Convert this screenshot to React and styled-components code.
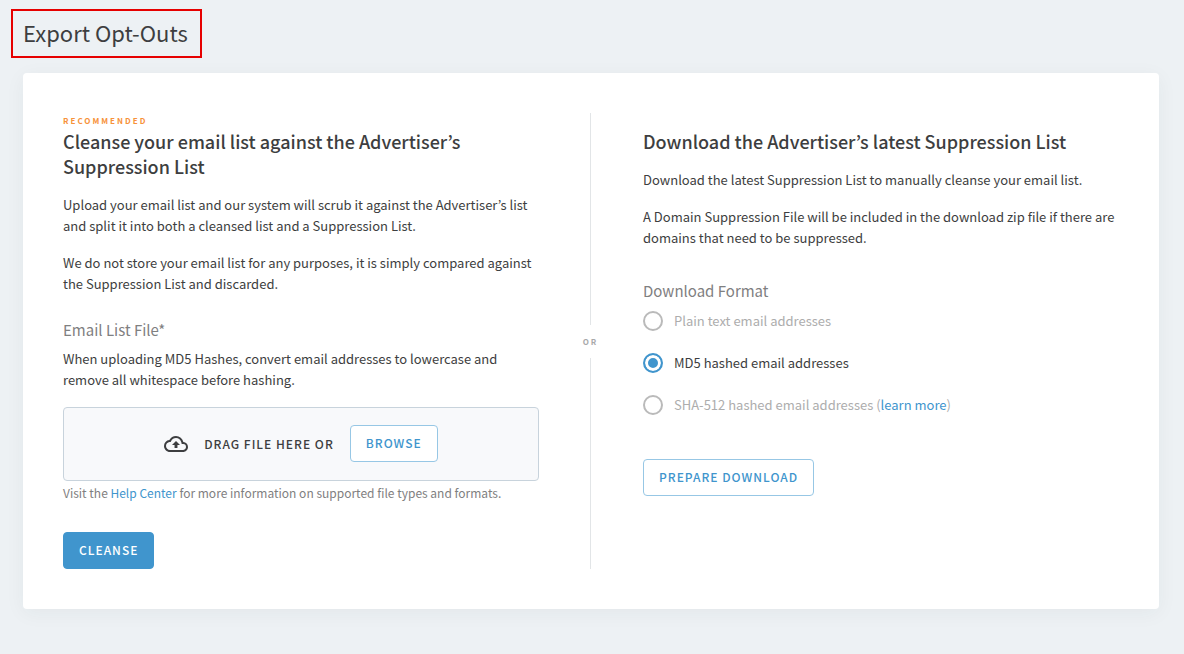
import { useRef, useState } from 'react';
import styled, { createGlobalStyle } from 'styled-components';
import { MdOutlineBackup } from 'react-icons/md';

const GlobalStyle = createGlobalStyle`
  * {
    box-sizing: border-box;
  }

  body {
    margin: 0;
    min-height: 100vh;
    background-color: #edf1f4;
    color: #3d3e40;
    font-family: 'Noto Sans CJK KR', 'Noto Sans', sans-serif;
    font-size: 13px;
    line-height: 21px;
  }
`;

const Container = styled.main`
  padding: 9px 11px 45px;
`;

const Title = styled.h1`
  width: fit-content;
  margin: 0;
  padding: 6px 12px 8px 10px;
  border: 2px solid #e60000;
  font-size: 22px;
  font-weight: 400;
  line-height: 31px;
`;

const Card = styled.div`
  display: grid;
  grid-template-columns: 1fr 104px 1fr;
  margin: 15px 14px 0 12px;
  padding: 40px;
  border-radius: 4px;
  background-color: white;
  box-shadow: 0 4px 20px rgba(40, 50, 60, 0.05);
`;

const Column = styled.section`
  display: flex;
  flex-direction: column;
  align-items: flex-start;
`;

const Tag = styled.div`
  min-height: 16px;
  color: #f7923a;
  font-size: 8px;
  font-weight: 700;
  letter-spacing: 2px;
  line-height: 16px;
  text-transform: uppercase;
`;

const Heading = styled.h2`
  margin: 0 0 15px;
  font-size: 18px;
  font-weight: 500;
  line-height: 25px;
`;

const Text = styled.p`
  margin: 0 0 16px;
`;

const FieldLabel = styled.label`
  margin: 8px 0 6px;
  color: #7f8081;
  font-size: 15px;
  line-height: 24px;
`;

const DropZone = styled.div`
  display: flex;
  align-items: center;
  justify-content: center;
  gap: 16px;
  width: 100%;
  margin-top: 1px;
  padding: 17px 17px 18px;
  border: 1px solid #c8d3dc;
  border-radius: 4px;
  background-color: #f8f9fb;
  font-size: 12px;
  font-weight: 500;
  letter-spacing: 1px;
  text-transform: uppercase;
`;

const HiddenInput = styled.input`
  display: none;
`;

const Button = styled.button`
  padding: 6px 15px 8px;
  border: 1px solid ${(props) => (props.$filled ? '#4095cd' : '#97c7e5')};
  border-radius: 4px;
  background-color: ${(props) => (props.$filled ? '#4095cd' : 'white')};
  color: ${(props) => (props.$filled ? 'white' : '#4095cd')};
  font-family: inherit;
  font-size: 12px;
  font-weight: 500;
  letter-spacing: 1px;
  line-height: 21px;
  text-transform: uppercase;
  cursor: pointer;
`;

const Hint = styled.p`
  margin: 3px 0 30px;
  color: #7f8081;
  font-size: 12px;
  line-height: 18px;
`;

const Link = styled.a`
  color: #4095cd;
  text-decoration: none;
`;

const Divider = styled.div`
  display: flex;
  flex-direction: column;
  align-items: center;
  gap: 6px;
  padding-right: 1px;
  color: #a8a9aa;
  font-size: 8px;
  font-weight: 700;
  letter-spacing: 2px;

  &::before,
  &::after {
    content: '';
    flex: 1;
    border-left: 1px solid #e2e5e7;
  }
`;

const Options = styled.fieldset`
  display: flex;
  flex-direction: column;
  gap: 22px;
  margin: 15px 0 44px;
  padding: 0;
  border: none;
`;

const Legend = styled.legend`
  margin-bottom: 8px;
  padding: 0;
  color: #7f8081;
  font-size: 15px;
  line-height: 24px;
`;

const Option = styled.label`
  display: flex;
  align-items: center;
  gap: 11px;
  color: ${(props) => (props.$active ? '#3d3e40' : '#adadad')};
  line-height: 20px;
`;

const Radio = styled.input`
  appearance: none;
  width: 20px;
  height: 20px;
  margin: 0;
  border: 2px solid #bababa;
  border-radius: 50%;

  &:checked {
    border-color: #4095cd;
    background-color: #4095cd;
    box-shadow: inset 0 0 0 3px white;
  }
`;

const formats = [
  { id: 'plain', label: 'Plain text email addresses' },
  { id: 'md5', label: 'MD5 hashed email addresses' },
  { id: 'sha512', label: 'SHA-512 hashed email addresses', more: true },
];

const App = () => {
  const [format, setFormat] = useState('md5');
  const fileInput = useRef(null);

  return (
    <Container>
      <GlobalStyle />
      <Title>Export Opt-Outs</Title>
      <Card>
        <Column>
          <Tag>Recommended</Tag>
          <Heading>Cleanse your email list against the Advertiser’s Suppression List</Heading>
          <Text>
            Upload your email list and our system will scrub it against the Advertiser’s list and
            split it into both a cleansed list and a Suppression List.
          </Text>
          <Text>
            We do not store your email list for any purposes, it is simply compared against the
            Suppression List and discarded.
          </Text>
          <FieldLabel htmlFor="email-file">Email List File*</FieldLabel>
          <Text>
            When uploading MD5 Hashes, convert email addresses to lowercase and remove all
            whitespace before hashing.
          </Text>
          <DropZone>
            <MdOutlineBackup size={24} aria-hidden="true" />
            <span>Drag file here or</span>
            <HiddenInput id="email-file" type="file" ref={fileInput} />
            <Button type="button" onClick={() => fileInput.current.click()}>Browse</Button>
          </DropZone>
          <Hint>
            Visit the <Link href="#help">Help Center</Link> for more information on supported file
            types and formats.
          </Hint>
          <Button type="button" $filled>Cleanse</Button>
        </Column>
        <Divider>OR</Divider>
        <Column>
          <Tag />
          <Heading>Download the Advertiser’s latest Suppression List</Heading>
          <Text>Download the latest Suppression List to manually cleanse your email list.</Text>
          <Text>
            A Domain Suppression File will be included in the download zip file if there are
            domains that need to be suppressed.
          </Text>
          <Options>
            <Legend>Download Format</Legend>
            {formats.map((item) => (
              <Option key={item.id} $active={format === item.id}>
                <Radio
                  type="radio"
                  name="format"
                  value={item.id}
                  checked={format === item.id}
                  onChange={() => setFormat(item.id)}
                />
                <span>
                  {item.label}
                  {item.more && <> (<Link href="#sha512">learn more</Link>)</>}
                </span>
              </Option>
            ))}
          </Options>
          <Button type="button">Prepare Download</Button>
        </Column>
      </Card>
    </Container>
  );
};

export default App;
